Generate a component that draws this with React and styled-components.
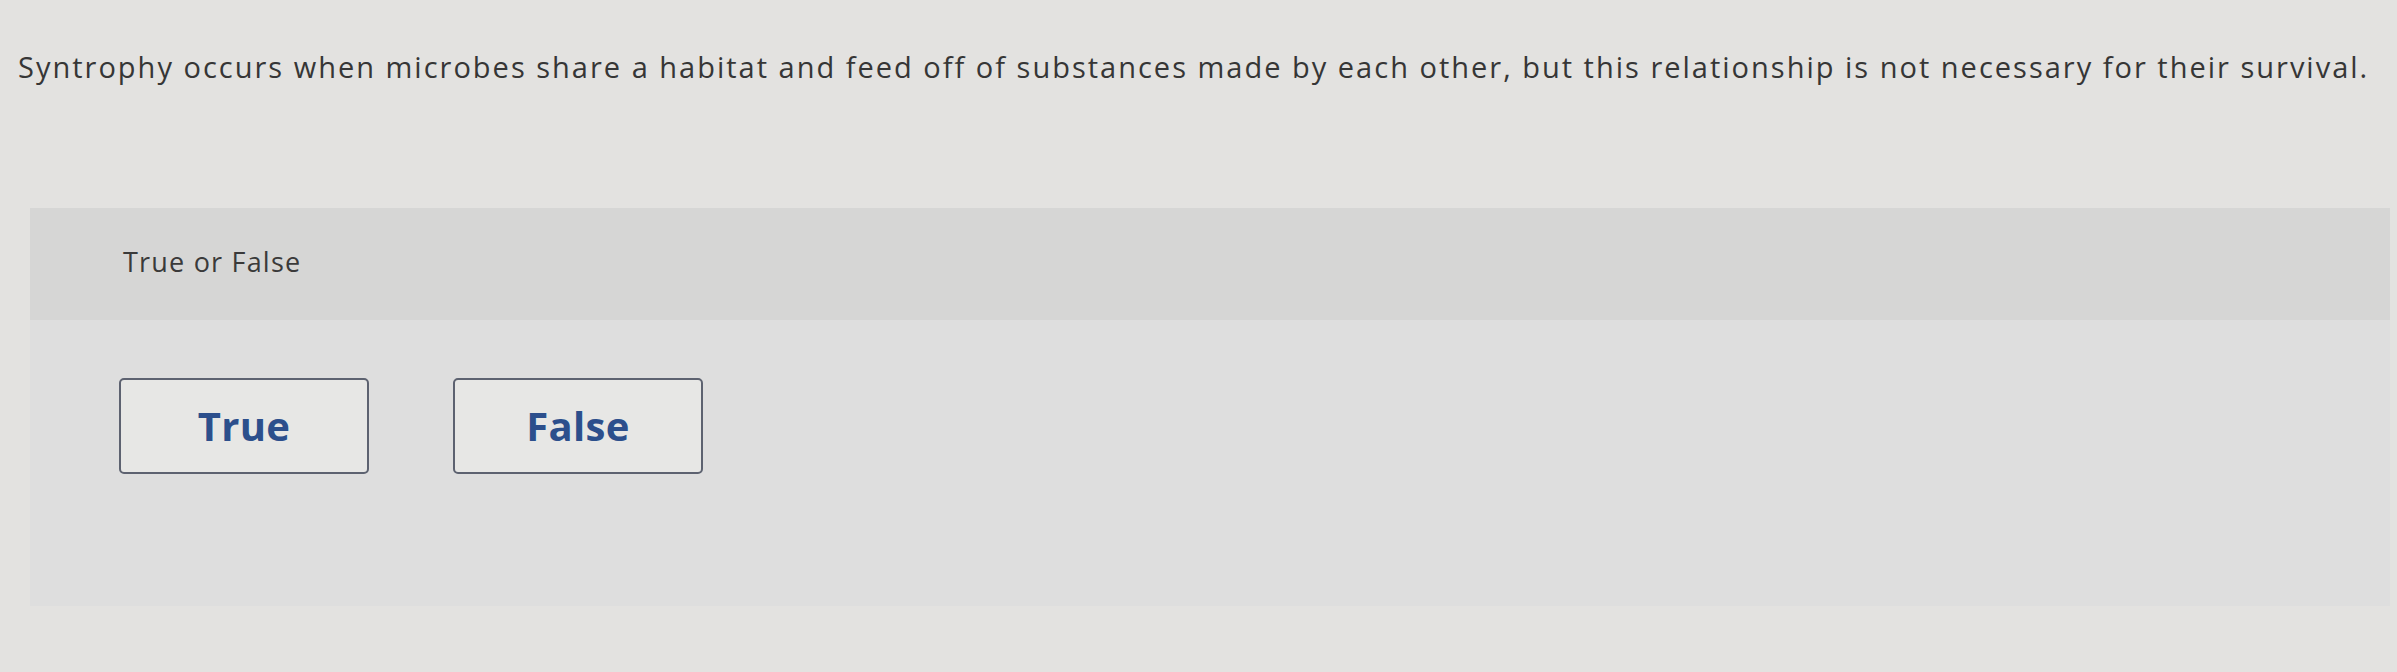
import React from "react";
import styled, { createGlobalStyle } from "styled-components";

const GlobalStyle = createGlobalStyle`
  html, body {
    margin: 0;
    padding: 0;
    background: #e3e2e0;
  }
  body {
    font-family: "Open Sans", "Liberation Sans", sans-serif;
    color: #3b3b3b;
  }
`;

const Page = styled.main`
  min-height: 672px;
  box-sizing: border-box;
  padding: 47px 0 0 18px;
`;

const Prompt = styled.p`
  margin: 0;
  font-size: 29px;
  font-weight: 500;
  line-height: 40px;
  letter-spacing: 2px;
  color: #363636;
  white-space: nowrap;
`;

const Card = styled.section`
  margin: 121px 7px 0 12px;
  background: #dedede;
`;

const CardHeader = styled.header`
  background: #d6d6d5;
  height: 112px;
  box-sizing: border-box;
  padding: 37px 0 0 93px;
`;

const Label = styled.span`
  font-size: 27px;
  line-height: 34px;
  letter-spacing: 1.2px;
  color: #3a3a3a;
`;

const Choices = styled.div`
  display: flex;
  gap: 84px;
  padding: 58px 0 132px 89px;
`;

const Choice = styled.button`
  width: 250px;
  height: 96px;
  box-sizing: border-box;
  border: 2px solid #5d6270;
  border-radius: 5px;
  background: #e7e7e5;
  color: #2c4f8c;
  font-family: "Open Sans", "Liberation Sans", sans-serif;
  font-weight: 700;
  font-size: 40px;
  letter-spacing: 0.3px;
  cursor: pointer;
  display: flex;
  align-items: center;
  justify-content: center;
  padding: 0 0 2px;
`;

export default function App() {
  return (
    <>
      <GlobalStyle />
      <Page>
        <Prompt>
          Syntrophy occurs when microbes share a habitat and feed off of substances made by each
          other, but this relationship is not necessary for their survival.
        </Prompt>
        <Card>
          <CardHeader>
            <Label>True or False</Label>
          </CardHeader>
          <Choices>
            <Choice>True</Choice>
            <Choice>False</Choice>
          </Choices>
        </Card>
      </Page>
    </>
  );
}
